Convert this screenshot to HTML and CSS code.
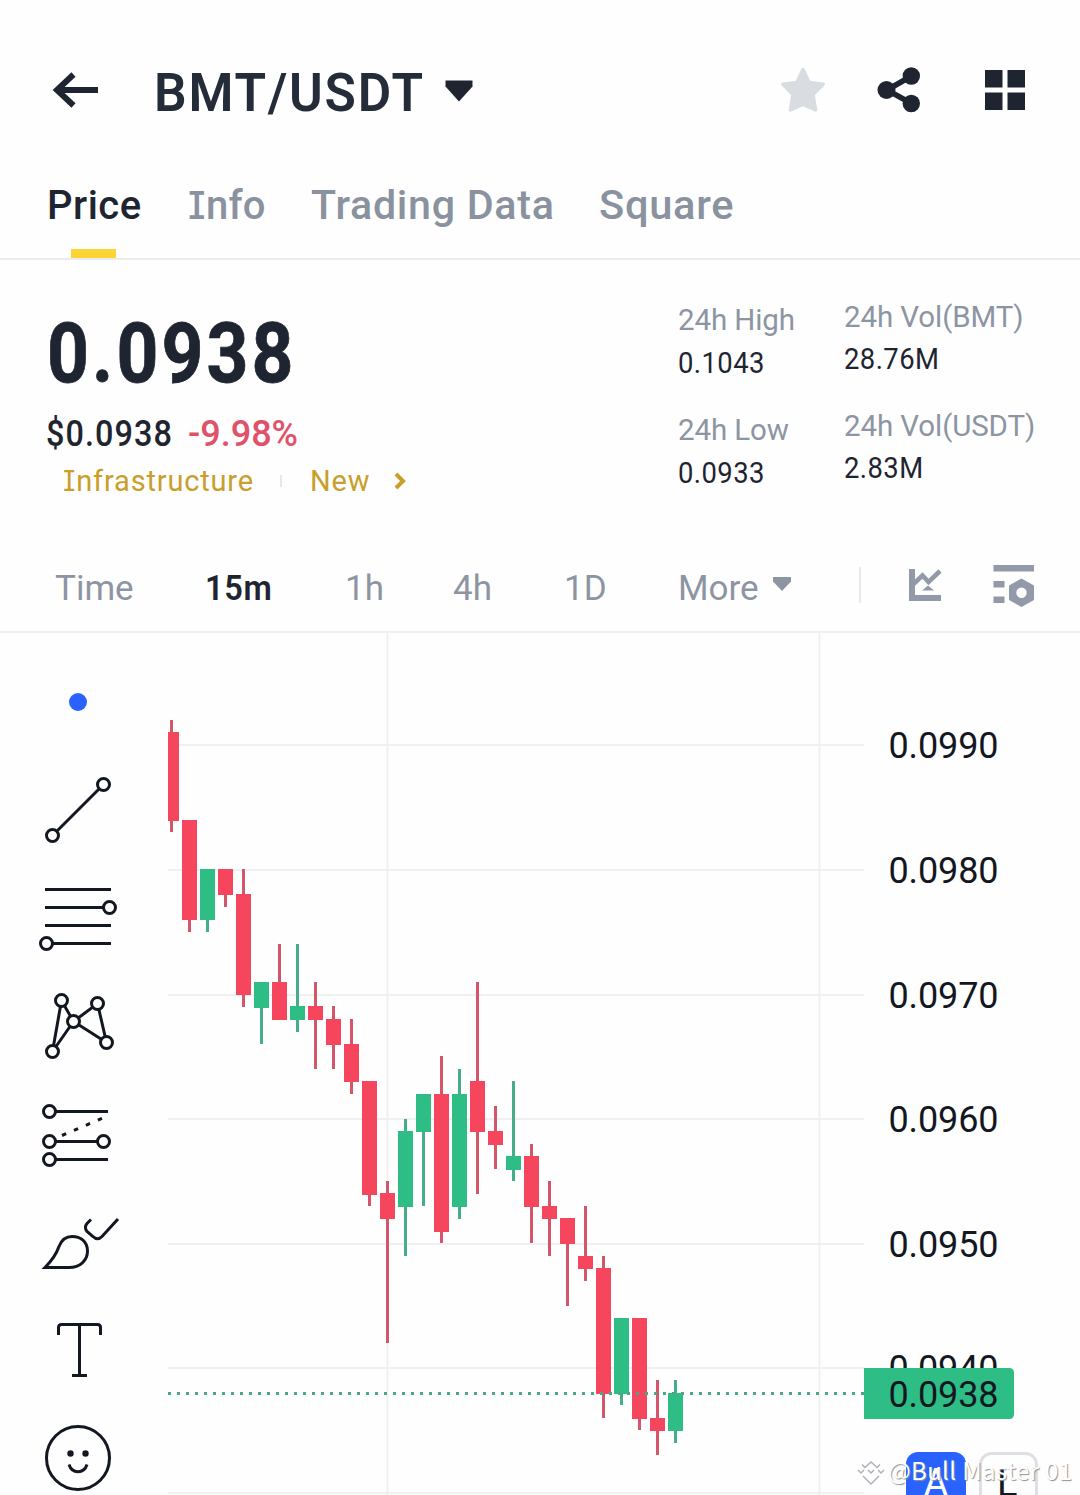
FILE: index.html
```html
<!DOCTYPE html>
<html lang="en">
<head>
<meta charset="utf-8">
<title>BMT/USDT</title>
<link rel="stylesheet" href="styles.css">
</head>
<body>
<header class="header">
  <svg class="back" width="48" height="40" viewBox="0 0 48 40"><path d="M47 20H6M22.500 4.500L6 20l16.500 15.500" fill="none" stroke="#1e2530" stroke-width="6"/></svg>
  <h1 class="pair"><span class="fit pair-name">BMT/USDT</span></h1>
  <svg class="pair-caret" width="28" height="22" viewBox="0 0 28 22"><path d="M.5.5h27v6L14 21.500.5 6.500z" fill="#1e2530"/></svg>
  <div class="actions">
    <svg width="46" height="48" viewBox="0 0 46 48"><path d="M23 3.500l6.200 13 14 1.800-10.200 10.200 2.600 15.500L23 38.500 10.400 44 13 28.500 2.800 18.300l14-1.800z" fill="#d9dce1" stroke="#d9dce1" stroke-width="3.500" stroke-linejoin="round"/></svg>
    <svg width="44" height="48" viewBox="0 0 44 48"><path d="M34.500 10L10 24l24.500 13.500" fill="none" stroke="#1e2530" stroke-width="5.500"/><g fill="#1e2530"><circle cx="34.300" cy="10" r="8.700"/><circle cx="9.500" cy="24" r="9"/><circle cx="34.300" cy="37.500" r="8.700"/></g></svg>
    <svg width="40" height="40" viewBox="0 0 40 40"><path d="M0 0h17.500v17.500H0zM22.500 0H40v17.500H22.500zM0 22.500h17.500V40H0zM22.500 22.500H40V40H22.500z" fill="#1e2530"/></svg>
  </div>
</header>

<nav class="tabs">
  <a class="tab active"><span class="fit t-price">Price</span></a>
  <a class="tab"><span class="fit t-info"><span class="slab">I</span>nfo</span></a>
  <a class="tab"><span class="fit t-trading">Trading Data</span></a>
  <a class="tab"><span class="fit t-square">Square</span></a>
</nav>

<section class="summary">
  <div class="quote">
    <div class="last"><span class="fit last-value">0.0938</span></div>
    <div class="sub"><span class="fit fiat">$0.0938</span><span class="fit change">-9.98%</span></div>
    <div class="tags">
      <span class="tag-a"><span class="slab">I</span>nfrastructure</span>
      <i class="tag-sep"></i>
      <span class="tag-b">New</span>
      <svg width="12" height="18" viewBox="0 0 12 18"><path d="M2 2l7 7-7 7" fill="none" stroke="#c99e2b" stroke-width="4"/></svg>
    </div>
  </div>
  <dl class="stats stats-price">
    <dt>24h High</dt><dd><span class="fit num">0.1043</span></dd>
    <dt>24h Low</dt><dd><span class="fit num">0.0933</span></dd>
  </dl>
  <dl class="stats stats-volume">
    <dt>24h Vol(BMT)</dt><dd><span class="fit num">28.76M</span></dd>
    <dt>24h Vol(USDT)</dt><dd><span class="fit num">2.83M</span></dd>
  </dl>
</section>

<div class="intervals">
  <span class="iv">Time</span>
  <span class="iv on"><span class="fit num">15m</span></span>
  <span class="iv">1h</span>
  <span class="iv">4h</span>
  <span class="iv">1D</span>
  <span class="iv">More</span>
  <svg width="18" height="14" viewBox="0 0 18 14"><path d="M0 0h18v4.500L9 14 0 4.500z" fill="#8d95a3"/></svg>
  <i class="divider"></i>
  <svg width="33" height="33" viewBox="0 0 33 33"><g fill="#9299a8"><path d="M0 1h6v26h26v6H0z"/><path d="M13 22.500l6-5 6 5z"/></g><path d="M4 16.500l9.500-9 6 6.500L31 3" fill="none" stroke="#9299a8" stroke-width="4.500"/></svg>
  <svg class="settings" width="41" height="42" viewBox="0 0 41 42"><path d="M.5 0H41v6.500H.5zM.5 16h11v6.500H.5zM.5 31.500h11V38H.5zM28.500 13.500l12.500 7v14.500L28.500 42 16 35V20.500zM28.500 22.500a5.200 5.200 0 1 0 0 10.400 5.200 5.200 0 0 0 0-10.400z" fill="#9299a8" fill-rule="evenodd"/></svg>
</div>

<main class="chart">
  <aside class="tools">
    <svg viewBox="0 0 168 108"><circle class="dot" cx="78" cy="54" r="9"/></svg>
    <svg viewBox="0 0 168 108"><path d="M52.500 79.500l51-51"/><circle cx="52.500" cy="79.500" r="6"/><circle cx="103.500" cy="28.500" r="6"/></svg>
    <svg viewBox="0 0 168 108"><path d="M45 25.500h66M45 43.500h66M45 61.500h66M45 79.500h66"/><circle cx="109.500" cy="43.500" r="6"/><circle cx="46.500" cy="79.500" r="6"/></svg>
    <svg viewBox="0 0 168 108"><path d="M52.500 79.500l9-51 12 21zM73.500 49.500l24-18 9 39z"/><circle cx="61.500" cy="28.500" r="6"/><circle cx="97.500" cy="31.500" r="6"/><circle cx="73.500" cy="49.500" r="6"/><circle cx="52.500" cy="79.500" r="6"/><circle cx="106.500" cy="70.500" r="6"/></svg>
    <svg viewBox="0 0 168 108"><path d="M49.500 31.500H108M49.500 61.500h54M49.500 79.500H108"/><path d="M62 55.500l42-18" stroke-dasharray="4.500 8.500"/><circle cx="49.500" cy="31.500" r="6"/><circle cx="49.500" cy="61.500" r="6"/><circle cx="103.500" cy="61.500" r="6"/><circle cx="49.500" cy="79.500" r="6"/></svg>
    <svg viewBox="0 0 168 108"><path d="M45 79.500h24c11 0 18.500-7 18.500-16.500S80.500 48.500 72 48.500c-7 0-10.500 3.500-13 10C56 67 50.500 74 45 79.500z"/><path d="M91 31.500l-4 4c-2 2.500-2 5.500 0 8l6 5c3 3 6 3 9 0l16-17.500"/></svg>
    <svg viewBox="0 0 168 108"><path d="M58.500 39v-7.500q0-3 3-3h36q3 0 3 3V39M79.500 28.500v51M72 79.500h15"/></svg>
    <svg viewBox="0 0 168 108"><circle cx="78" cy="54" r="31.500"/><path d="M69 60.500c3 9.500 15 9.500 18 0"/><circle class="eye" cx="70.500" cy="49.500" r="3.200"/><circle class="eye" cx="85.500" cy="49.500" r="3.200"/></svg>
  </aside>
  <svg class="plot" id="plot" width="696" height="862" viewBox="0 0 696 862"></svg>
  <svg class="axis" id="axis" width="216" height="862" viewBox="0 0 216 862"></svg>
  <div class="watermark">
    <svg width="28" height="26" viewBox="0 0 28 26"><path d="M8.500 6L14 1l5.500 5M5 3.500L8.500 7M23 3.500L19.500 7M1 9l3 3 3-3M11 9l3 3 3-3M21 9l3 3 3-3M6 15l8 8 8-8" fill="none" stroke="#b0b2b8" stroke-width="1.500"/></svg>
    <span class="handle">@Bull Master 01</span>
  </div>
</main>
<script src="chart.js"></script>
</body>
</html>
```
FILE: styles.css
```css
* { box-sizing: border-box; }
html, body { margin: 0; height: 1495px; overflow: hidden; }
body { width: 1080px; background: #fefefe; color: #1e2530; font-family: Roboto, "Liberation Sans", sans-serif; }
svg { display: block; flex: none; }
.fit { display: inline-block; transform-origin: 0 50%; white-space: nowrap; }
.slab { font-family: Inter, sans-serif; font-feature-settings: "cv08"; font-size: .97em; line-height: 1; }

.header { height: 180px; padding: 0 55px 0 51px; display: flex; align-items: center; }
.pair { margin: 6px 0 0 56px; width: 290px; font-size: 53px; line-height: 60px; font-weight: 600; color: #242c3a; }
.pair-name { transform: translateX(-1px) scaleX(.97); letter-spacing: 1.800px; }
.pair-caret { margin-top: 2px; }
.actions { margin-left: auto; display: flex; align-items: center; }
.actions svg + svg { margin-left: 51px; }
.actions svg:last-child { margin-left: 64px; }

.tabs { height: 80px; padding-left: 47px; display: grid; grid-template-columns: 141px 123px 288px 200px; border-bottom: 2px solid #ececee; font-size: 40px; line-height: 51px; font-weight: 500; color: #8a929f; }
.tab.active { color: #1e2530; }
.tab.active::after { content: ""; display: block; width: 45px; height: 9px; margin: 18px 0 0 24px; background: #fcd535; }
.t-price { letter-spacing: .5px; }
.t-info { letter-spacing: .3px; }
.t-trading { transform: scaleX(1.030); letter-spacing: .7px; }
.t-square { transform: scaleX(1.040); letter-spacing: .7px; }

.summary { height: 282px; padding-left: 47px; display: grid; grid-template-columns: 631px 166px 1fr; }
.quote { padding-top: 52px; }
.last { font-size: 84px; line-height: 84px; font-weight: 700; }
.last-value { transform: scaleX(.87); letter-spacing: 3.600px; -webkit-text-stroke: .8px #1e2530; }
.sub { margin-top: 16px; display: grid; grid-template-columns: 141px 1fr; font-size: 36px; line-height: 44px; font-weight: 500; }
.fiat { transform: translateX(-1px) scaleX(.9); letter-spacing: 1.200px; }
.change { color: #e0526a; }
.tags { height: 50px; padding-left: 16px; display: flex; align-items: center; font-size: 29px; line-height: 34px; color: #c99e2b; }
.tag-a { width: 217px; letter-spacing: .820px; white-space: nowrap; }
.tag-sep { width: 2px; height: 12px; margin-right: 28px; background: #e6e7ea; }
.tag-b { width: 84px; letter-spacing: .9px; }
.stats { margin: 0; padding-top: 39px; font-size: 29.500px; line-height: 43px; letter-spacing: -.1px; }
.stats dt { color: #8d95a3; }
.stats dd { margin: 0 0 24px; }
.stats .num { transform: scaleX(.93); letter-spacing: .450px; }
.stats-volume { padding-top: 36px; line-height: 42px; }
.stats-volume dd { margin-bottom: 25px; }

.intervals { height: 91px; padding: 0 0 5px 55px; display: grid; grid-template-columns: 150px 140px 108px 111px 114px 95px 86px 50px 84px 41px; align-items: center; font-size: 35px; color: #8d95a3; border-bottom: 2px solid #f0f0f1; }
.iv { padding-top: 8px; }
.iv.on { color: #1e2530; font-weight: 600; }
.iv .num { transform: scaleX(.93); letter-spacing: .700px; }
.divider { width: 2px; height: 36px; margin-top: 2px; background: #e8e9eb; }
.settings { margin-top: 4px; }

.chart { position: relative; height: 862px; display: grid; grid-template-columns: 168px 696px 216px; }
.tools { padding-top: 15px; display: flex; flex-direction: column; }
.tools svg { width: 168px; height: 108px; fill: none; stroke: #131722; stroke-width: 3; }
.tools circle { fill: #fefefe; }
.tools .dot { fill: #2962ff; stroke: none; }
.tools .eye { fill: #131722; stroke: none; }
.grid { stroke: #f0f0f1; stroke-width: 2; }
.up { fill: #2ebd85; }
.down { fill: #f6465d; }
.wick.up { fill: #44ae86; }
.wick.down { fill: #d4566b; }
.last-line { stroke: #4aa787; stroke-width: 3; stroke-dasharray: 3 6; }
.axis text { font-size: 36px; fill: #131722; }
.axis .toggle { font-size: 38px; }
.axis .auto { fill: #fff; }
.watermark { position: absolute; left: 857px; top: 820px; display: flex; align-items: center; }
.watermark svg { margin-top: 8px; }
.handle { margin-left: 3px; font: 400 24px/34px "Noto Sans CJK SC", "Noto Sans", sans-serif; letter-spacing: .350px; color: #fff; text-shadow: 1px 1px 1px #8e9098; white-space: nowrap; }
```
FILE: chart.js
```js
// Candles as [open, high, low, close], in units of 0.0001 USDT.
const candles = [
  [991,992,983,984],[984,984,975,976],[976,980,975,980],[980,980,977,978],
  [978,980,969,970],[969,971,966,971],[971,974,968,968],[968,974,967,969],
  [969,971,964,968],[968,969,964,966],[966,968,962,963],[963,963,953,954],
  [954,955,942,952],[953,960,949,959],[959,962,953,962],[962,965,950,951],
  [953,964,952,962],[963,971,954,959],[959,961,956,958],[956,963,955,957],
  [957,958,950,953],[953,955,949,952],[952,952,945,950],[949,953,947,948],
  [948,949,936,938],[938,944,937,944],[944,944,935,936],[936,939,933,935],
  [935,939,934,938]
];
const y = p => 112.27 + (990 - p) * 12.462;
const rect = (cls, x, top, w, h) =>
  `<rect class="${cls}" x="${x}" y="${top}" width="${w}" height="${h}"/>`;

let plot = '';
let axis = '';
for (let p = 990; p >= 930; p -= 10) {
  const gy = Math.round(y(p));
  plot += `<path class="grid" d="M0 ${gy}H696"/>`;
  if (p > 930) axis += `<text x="24.500" y="${gy + 13}" textLength="110">0.0${p}</text>`;
}
plot += '<path class="grid" d="M219.500 0V862M651.500 0V862"/>';
candles.forEach(([o, h, l, c], i) => {
  const cx = 3.5 + i * 18;
  const dir = c >= o ? 'up' : 'down';
  const top = Math.round(y(Math.max(o, c)) - 0.5);
  const bottom = Math.round(y(Math.min(o, c)) + 0.6);
  const high = Math.round(y(h) - 0.5);
  const low = Math.round(y(l) - 0.3);
  plot += rect('wick ' + dir, cx - 1.5, high, 3, low - high);
  plot += rect(dir, cx - 7.5, top, 15, bottom - top);
});
plot += '<path class="last-line" d="M0 760.500H696"/>';
document.getElementById('plot').innerHTML = plot;

axis += '<path class="up" d="M0 735h145q5 0 5 5v41q0 5-5 5H0z"/>';
axis += '<text x="24.500" y="774" textLength="110">0.0938</text>';
axis += '<rect x="42" y="819" width="60" height="60" rx="12" fill="#2962ff"/>';
axis += '<rect x="116.500" y="820.500" width="56" height="60" rx="11" fill="#fefefe" stroke="#dfe0e5" stroke-width="3"/>';
axis += '<text class="toggle auto" x="59.500" y="863">A</text><text class="toggle" x="133" y="863">L</text>';
document.getElementById('axis').innerHTML = axis;
```
